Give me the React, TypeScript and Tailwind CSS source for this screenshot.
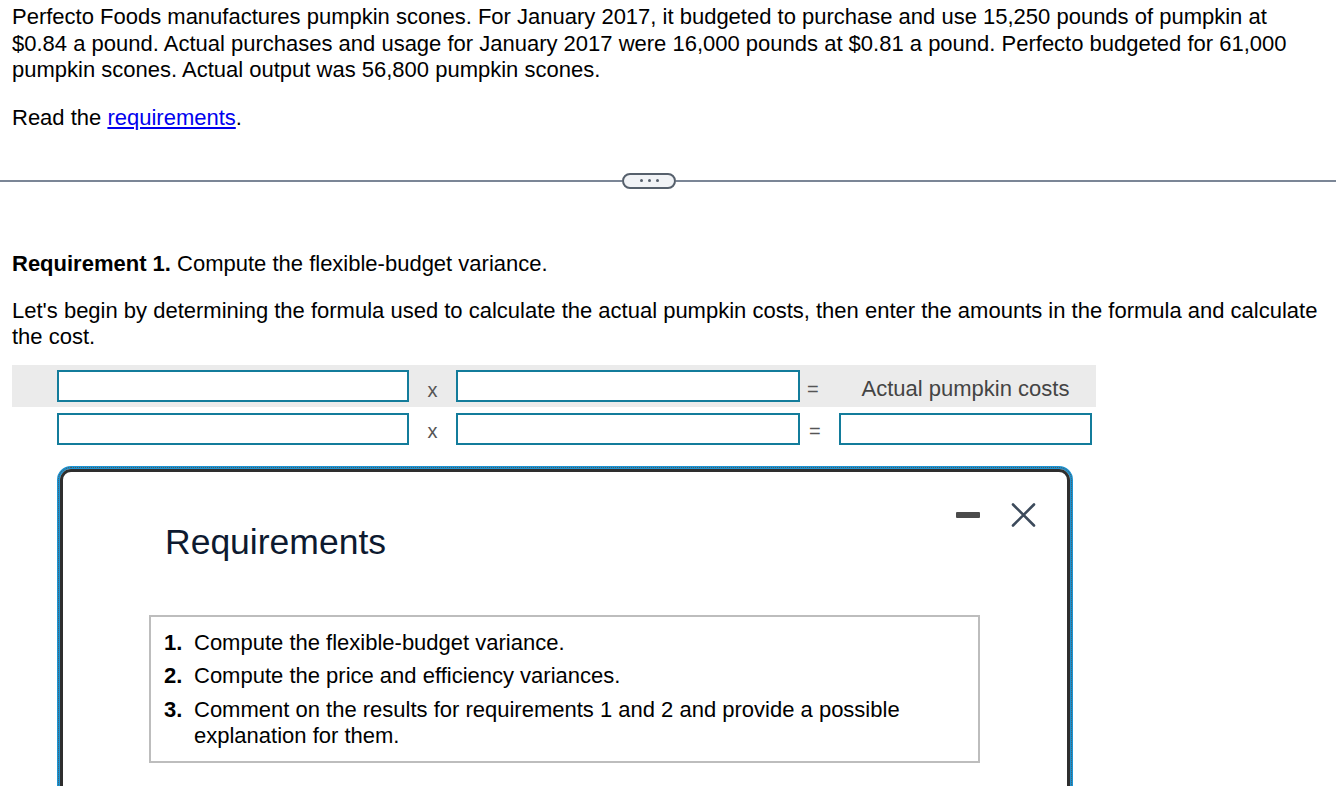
import React from 'react';

const font = { fontFamily: '"Liberation Sans", Arial, sans-serif' };

const Field = ({ w }: { w: string }) => (
  <div className={`${w} h-[32px] border-2 border-[#137c9b] bg-white`} />
);

const items = [
  'Compute the flexible-budget variance.',
  'Compute the price and efficiency variances.',
  'Comment on the results for requirements 1 and 2 and provide a possible explanation for them.',
];

export default function App() {
  return (
    <div className="w-[1336px] h-[786px] overflow-hidden bg-white text-[22px] text-black" style={font}>
      <div className="pl-[12px] pt-[4px] w-[1322px]">
        <p className="leading-[26.5px]">
          Perfecto Foods manufactures pumpkin scones. For January 2017, it budgeted to purchase and use 15,250 pounds of pumpkin at
          $0.84 a pound. Actual purchases and usage for January 2017 were 16,000 pounds at $0.81 a pound. Perfecto budgeted for 61,000
          pumpkin scones. Actual output was 56,800 pumpkin scones.
        </p>
        <p className="mt-[21px] leading-[26px]">
          Read the <a className="text-[#0000ee] underline">requirements</a>.
        </p>
      </div>

      {/* divider */}
      <div className="flex items-center mt-[42px] h-[16px]">
        <div className="w-[622px] h-[2px] bg-[#7b8696]" />
        <div className="w-[54px] h-[16px] rounded-full border-2 border-[#56606c] bg-[#f1f3f6] flex items-center justify-center gap-[5px]">
          <span className="w-[3px] h-[3px] rounded-full bg-[#56606c]" />
          <span className="w-[3px] h-[3px] rounded-full bg-[#56606c]" />
          <span className="w-[3px] h-[3px] rounded-full bg-[#56606c]" />
        </div>
        <div className="flex-1 h-[2px] bg-[#7b8696]" />
      </div>

      <div className="pl-[12px] w-[1322px]">
        <p className="mt-[62px] leading-[26px]">
          <b>Requirement 1.</b> Compute the flexible-budget variance.
        </p>
        <p className="mt-[21px] leading-[26px]">
          Let's begin by determining the formula used to calculate the actual pumpkin costs, then enter the amounts in the formula and calculate
          the cost.
        </p>

        {/* formula rows */}
        <div className="mt-[15px] w-[1084px]">
          <div className="flex items-center h-[42px] bg-[#ebebeb] pl-[45px]">
            <Field w="w-[352px]" />
            <div className="w-[47px] text-center text-[#555] text-[20px] pt-[8px]">x</div>
            <Field w="w-[344px]" />
            <div className="w-[39px] pl-[7px] text-[#555] text-[20px] pt-[6px]">=</div>
            <div className="w-[253px] text-center text-[#444] pt-[6px]">Actual pumpkin costs</div>
          </div>
          <div className="flex items-center h-[38px] pt-[6px] pl-[45px]">
            <Field w="w-[352px]" />
            <div className="w-[47px] text-center text-[#555] text-[20px] pt-[4px]">x</div>
            <Field w="w-[344px]" />
            <div className="w-[39px] pl-[9px] text-[#555] text-[20px] pt-[4px]">=</div>
            <Field w="w-[253px]" />
          </div>
        </div>
      </div>

      {/* requirements modal */}
      <div className="ml-[57px] mt-[21px] w-[1016px] h-[360px] rounded-[14px] border-[3px] border-[#1b93d2] outline-1 outline-dotted outline-[#555] -outline-offset-2">
        <div className="h-full rounded-[11px] border-[3px] border-[#2e2e2e] bg-white">
          <div className="flex justify-end items-center gap-[31px] pt-[31px] pr-[31px]">
            <div className="w-[24px] h-[6px] rounded-[1px] bg-[#4b4b4b]" />
            <svg width="25" height="24" viewBox="0 0 25 24" fill="none" stroke="#3c4a5b" strokeWidth="2.6" strokeLinecap="round">
              <path d="M2 1.5L23 22.5M23 1.5L2 22.5" />
            </svg>
          </div>
          <h2 className="ml-[102px] mt-[-5px] text-[35.5px] leading-[40px] text-[#0d1a30]">Requirements</h2>
          <div className="ml-[86px] mt-[53px] w-[831px] border-2 border-[#bdbdbd] pl-[13px] pr-[12px] pt-[13px] pb-[11px]">
            <ol className="flex flex-col gap-[7px]">
              {items.map((t, i) => (
                <li key={i} className="flex leading-[26.5px]">
                  <span className="w-[30px] shrink-0 font-bold">{i + 1}.</span>
                  <span className="w-[710px]">{t}</span>
                </li>
              ))}
            </ol>
          </div>
        </div>
      </div>
    </div>
  );
}
